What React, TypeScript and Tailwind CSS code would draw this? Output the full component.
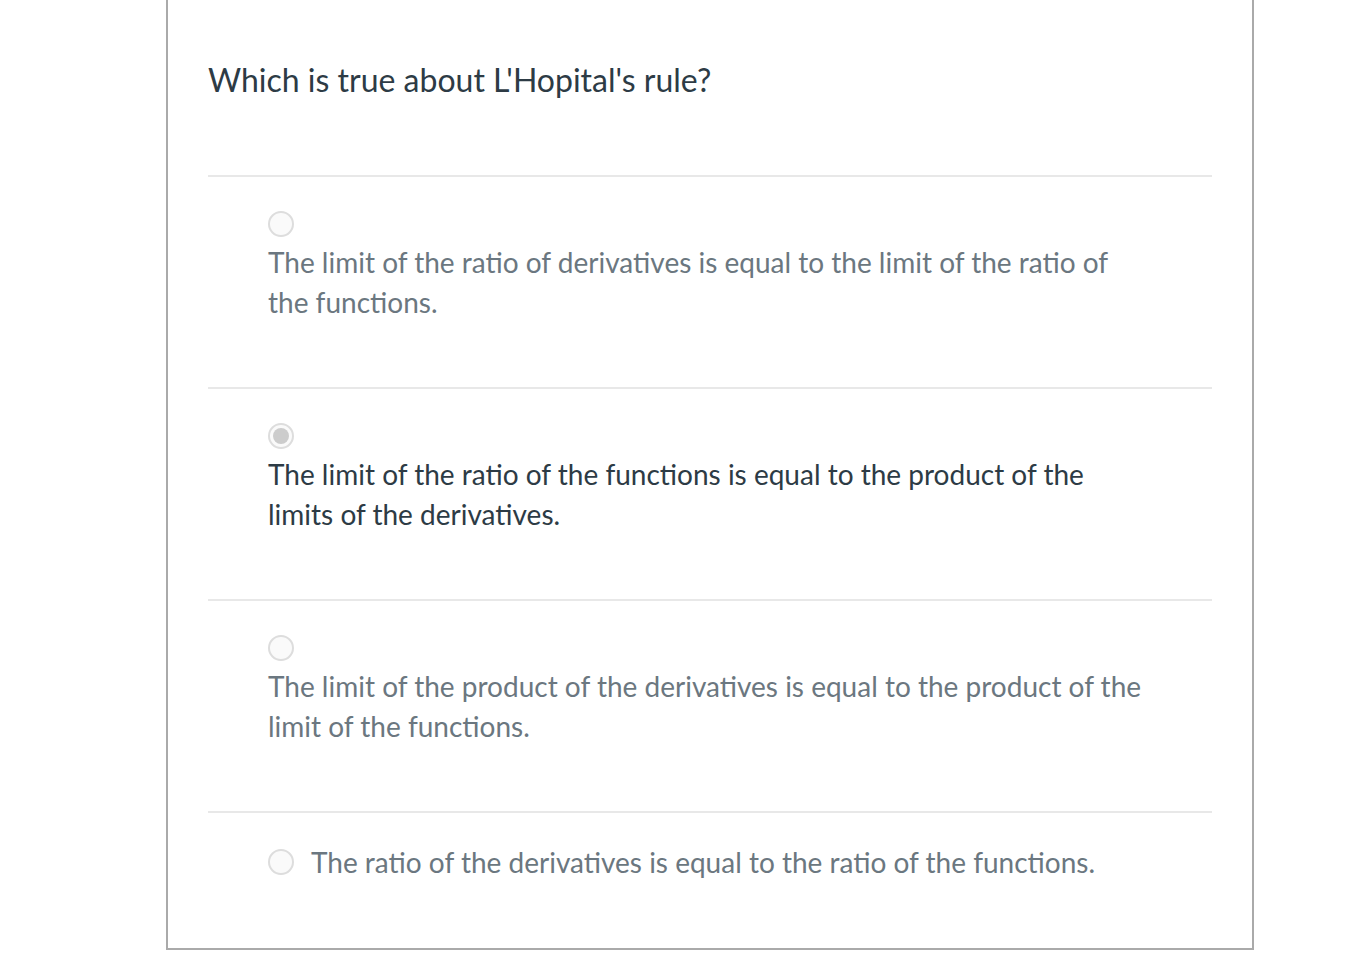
import React from 'react';

type Option = {
  id: string;
  text: string;
  selected?: boolean;
  inline?: boolean;
};

const options: Option[] = [
  { id: 'a', text: 'The limit of the ratio of derivatives is equal to the limit of the ratio of the functions.' },
  { id: 'b', text: 'The limit of the ratio of the functions is equal to the product of the limits of the derivatives.', selected: true },
  { id: 'c', text: 'The limit of the product of the derivatives is equal to the product of the limit of the functions.' },
  { id: 'd', text: 'The ratio of the derivatives is equal to the ratio of the functions.', inline: true },
];

const Radio: React.FC<{ selected?: boolean }> = ({ selected }) => (
  <span className="flex h-[26px] w-[26px] shrink-0 items-center justify-center rounded-full border-2 border-[#dddddd] bg-[#fafafa]">
    {selected && <span className="h-[16px] w-[16px] rounded-full bg-[#cccccc]" />}
  </span>
);

const App: React.FC = () => {
  return (
    <div className="min-h-screen bg-white font-['Lato','Open_Sans',sans-serif]">
      <div className="ml-[166px] h-[950px] w-[1088px] border-2 border-t-0 border-[#aaaaaa] px-[40px]">
        <div className="h-[175px] pt-[60px]">
          <h2 className="text-[32px] leading-[40px] text-[#2d3b45]">Which is true about L'Hopital's rule?</h2>
        </div>

        {options.map((opt) => (
          <div
            key={opt.id}
            className={`border-t-2 border-[#e8e8e8] pl-[60px] ${opt.inline ? 'h-[137px] pt-[36px]' : 'h-[212px] pt-[34px]'}`}
          >
            {opt.inline ? (
              <div className="flex items-center gap-[17px]">
                <Radio selected={opt.selected} />
                <span className="text-[28px] leading-[26px] text-[#6b7780]">{opt.text}</span>
              </div>
            ) : (
              <div className="flex flex-col">
                <Radio selected={opt.selected} />
                <p
                  className={`mt-[5px] max-w-[878px] text-[28px] leading-[40px] ${
                    opt.selected ? 'text-[#2d3b45]' : 'text-[#6b7780]'
                  }`}
                >
                  {opt.text}
                </p>
              </div>
            )}
          </div>
        ))}
      </div>
    </div>
  );
};

export default App;
